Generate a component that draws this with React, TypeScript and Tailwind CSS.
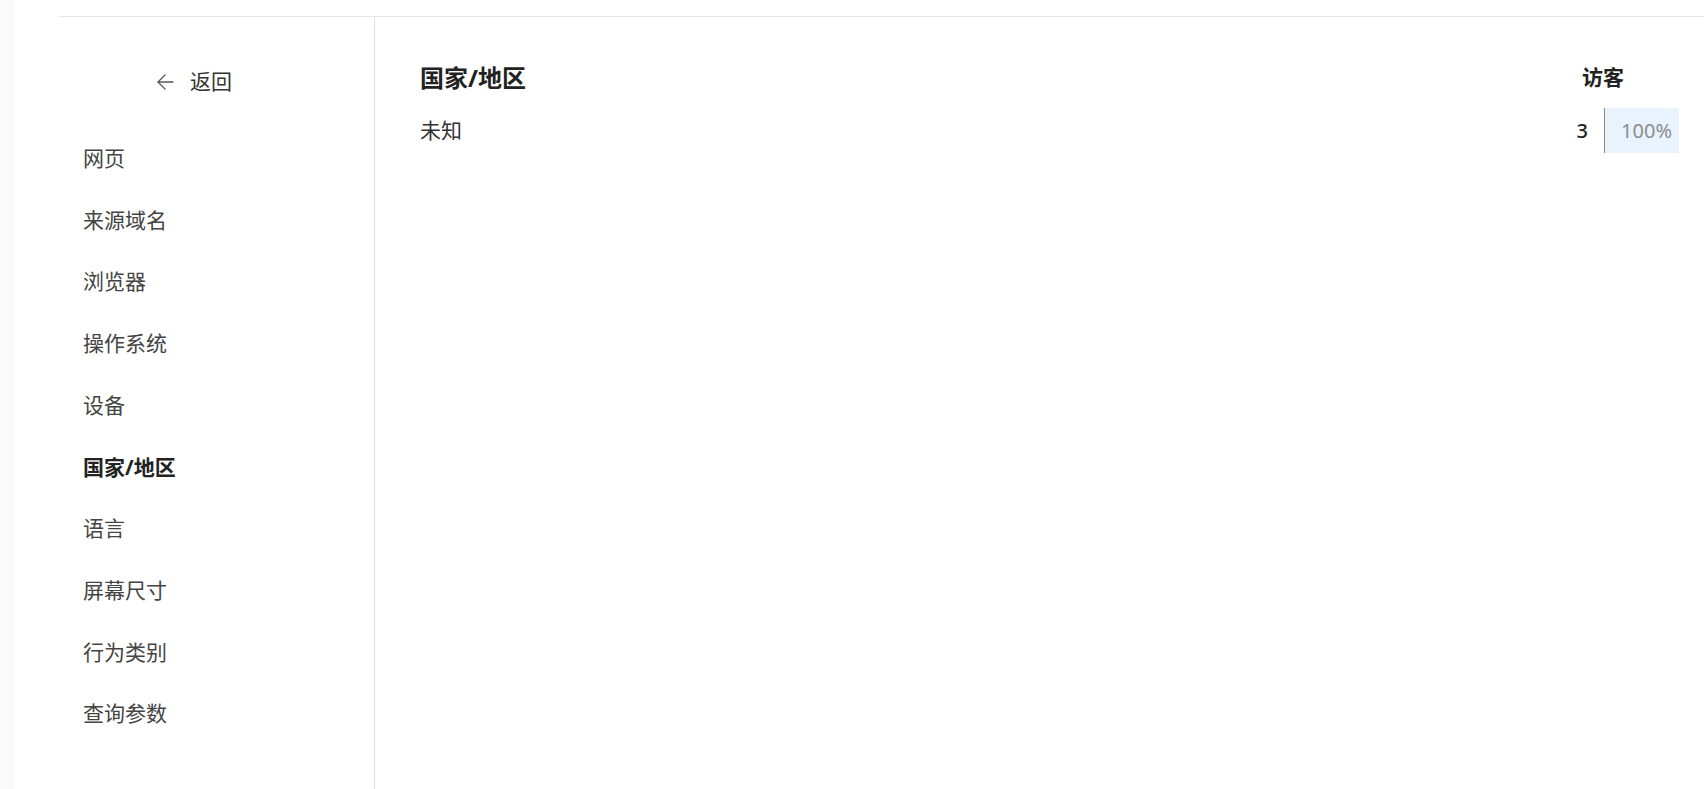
import { useState } from "react";

const navItems = [
  "网页",
  "来源域名",
  "浏览器",
  "操作系统",
  "设备",
  "国家/地区",
  "语言",
  "屏幕尺寸",
  "行为类别",
  "查询参数",
];

const rows = [{ name: "未知", visitors: 3, percent: 100 }];

export default function App() {
  const [active, setActive] = useState("国家/地区");

  return (
    <div className="flex h-[789px] w-full overflow-hidden bg-white font-['Noto_Sans','Noto_Sans_CJK_SC',sans-serif] text-[#333]">
      <div className="w-[14px] shrink-0 bg-[#fafafa]" />
      <div className="ml-[45px] flex flex-1 flex-col pt-[16px]">
        <div className="flex flex-1 border-t border-[#e5e5e5]">
          {/* sidebar */}
          <aside className="w-[316px] shrink-0 border-r border-[#e0e0e0] pt-[48px]">
            <button className="flex h-[34px] items-center gap-[16px] pl-[98px] text-[21px] text-[#333]">
              <svg width="17" height="16" viewBox="0 0 17 16" fill="none" stroke="#555" strokeWidth="1.3" strokeLinecap="round" strokeLinejoin="round">
                <path d="M16 8H1" />
                <path d="M8 1L1 8L8 15" />
              </svg>
              返回
            </button>
            <nav className="mt-[29px] flex flex-col">
              {navItems.map((item) => (
                <button
                  key={item}
                  onClick={() => setActive(item)}
                  className={
                    "flex h-[61.7px] items-center pl-[24px] text-left text-[21px] " +
                    (active === item ? "font-bold text-[#222]" : "text-[#444]")
                  }
                >
                  {item}
                </button>
              ))}
            </nav>
          </aside>

          {/* content */}
          <main className="flex-1 pl-[45px] pr-[25px] pt-[44px]">
            <div className="flex h-[34px] items-center justify-between">
              <h2 className="text-[24px] font-bold text-[#222]">国家/地区</h2>
              <span className="mr-[55px] text-[21px] font-bold text-[#222]">访客</span>
            </div>
            {rows.map((r) => (
              <div key={r.name} className="mt-[13px] flex h-[45px] items-center justify-between">
                <span className="text-[21px] text-[#333]">{r.name}</span>
                <div className="flex h-full items-center gap-[16px]">
                  <span className="text-[20px] font-medium text-[#222]">{r.visitors}</span>
                  <div className="flex h-full w-[75px] items-center justify-end border-l border-[#888] bg-[#e8f3fe] pr-[7px] text-[20px] text-[#8c8c8c]">
                    {r.percent}%
                  </div>
                </div>
              </div>
            ))}
          </main>
        </div>
      </div>
    </div>
  );
}
